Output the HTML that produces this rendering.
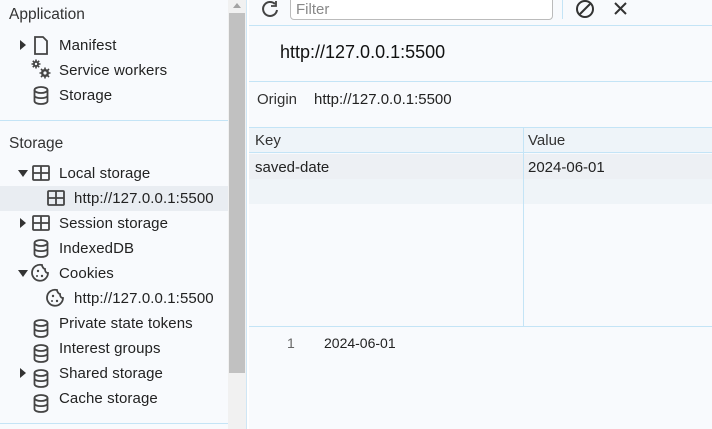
<!DOCTYPE html>
<html><head><style>
*{box-sizing:border-box;margin:0;padding:0}
body{width:712px;height:429px;overflow:hidden;background:#f8fafd;font-family:"Liberation Sans","Noto Sans CJK KR",sans-serif;font-size:15px;color:#222;position:relative}
.a{position:absolute;white-space:nowrap}
.row{position:absolute;left:0;height:25px;line-height:25px;letter-spacing:0.1px}
.hdr{color:#333;font-size:15.5px}
</style></head><body>
<div class="a" style="left:0;top:0;width:228px;height:429px;background:#f8fafd"></div>
<div class="a hdr" style="left:9px;top:6px">Application</div>
<div class="a" style="left:0;top:120px;width:228px;height:1px;background:#c4e4f6"></div>
<div class="a hdr" style="left:9px;top:135px">Storage</div>
<div class="a" style="left:0;top:423px;width:228px;height:1px;background:#c4e4f6"></div>
<div class="a" style="left:0;top:186px;width:228px;height:25px;background:#e9edf2"></div>

<svg class="a" style="left:0;top:0" width="228" height="429" fill="none" stroke="#444" stroke-width="1.8">
<g fill="#333" stroke="none">
<path d="M20 40l6 5-6 5z"/><path d="M18 170h10l-5 7z"/><path d="M20 218l6 5-6 5z"/><path d="M18 270h10l-5 7z"/><path d="M20 368l6 5-6 5z"/>
</g>
<path d="M35 37h8l4 4v13h-12z"/>
<g fill="#444" stroke="none">
<circle cx="36" cy="64" r="3"/><circle cx="45" cy="73" r="4"/>
</g>
<g stroke="#444" stroke-width="1.6"><path d="M36 59.5v9M31.5 64h9M32.8 60.8l6.4 6.4M39.2 60.8l-6.4 6.4"/><path d="M45 67.5v11M39.5 73h11M41 69l8 8M49 69l-8 8"/></g>
<g fill="#f8fafd" stroke="none"><circle cx="36" cy="64" r="1.2"/><circle cx="45" cy="73" r="1.6"/></g>
<g id="db"><ellipse cx="41" cy="90" rx="6.5" ry="3"/><path d="M34.5 90v11c0 4 13 4 13 0v-11M34.5 95.5c0 3.5 13 3.5 13 0"/></g>
<use href="#db" y="153"/><use href="#db" y="233"/><use href="#db" y="258"/><use href="#db" y="283"/><use href="#db" y="308"/>
<g id="tb"><rect x="33" y="166" width="16" height="14" rx="1"/><path d="M33 173h16M41 166v14"/></g>
<use href="#tb" x="15" y="25"/><use href="#tb" y="50"/>
<g id="ck"><path d="M48 273a8 8 0 1 1-6-8c0 2 2 4 3 4c0 2 1 4 3 4z"/><g fill="#444" stroke="none"><circle cx="38" cy="271" r="1.2"/><circle cx="42" cy="276" r="1.2"/><circle cx="37" cy="276" r="1"/></g></g>
<use href="#ck" x="15" y="25"/>
</svg>
<div class="row" style="top:33px;left:59px">Manifest</div>
<div class="row" style="top:58px;left:59px">Service workers</div>
<div class="row" style="top:83px;left:59px">Storage</div>
<div class="row" style="top:161px;left:59px">Local storage</div>
<div class="row" style="top:186px;left:74px">http://127.0.0.1:5500</div>
<div class="row" style="top:211px;left:59px">Session storage</div>
<div class="row" style="top:236px;left:59px">IndexedDB</div>
<div class="row" style="top:261px;left:59px">Cookies</div>
<div class="row" style="top:286px;left:74px">http://127.0.0.1:5500</div>
<div class="row" style="top:311px;left:59px">Private state tokens</div>
<div class="row" style="top:336px;left:59px">Interest groups</div>
<div class="row" style="top:361px;left:59px">Shared storage</div>
<div class="row" style="top:386px;left:59px">Cache storage</div>
<div class="a" style="left:228px;top:0;width:18px;height:429px;background:#f1f1f1"></div>
<div class="a" style="left:229px;top:13px;width:16px;height:360px;background:#c1c1c1"></div>
<svg class="a" style="left:229px;top:0" width="16" height="12"><path d="M4 8l4-5 4 5z" fill="#a3a3a3"/></svg>
<div class="a" style="left:246px;top:0;width:3px;height:429px;background:#fff;border-left:1px solid #cfe6f5"></div>
<div class="a" style="left:249px;top:0;width:463px;height:429px;background:#f8fafd"></div>
<svg class="a" style="left:258px;top:0" width="24" height="20" fill="none" stroke="#444" stroke-width="2"><path d="M17 4a7 7 0 1 0 2 6"/><path d="M18 1v5h-5" stroke-width="1.8"/></svg>
<div class="a" style="left:290px;top:-4px;width:263px;height:24px;border:1px solid #bbb;border-radius:4px;background:#fff;color:#888;padding:3px 0 0 5px;line-height:20px;font-size:15px">Filter</div>
<div class="a" style="left:562px;top:0;width:1px;height:19px;background:#c4e4f6"></div>
<svg class="a" style="left:574px;top:0" width="60" height="20" fill="none" stroke="#333" stroke-width="2"><circle cx="11" cy="9" r="8"/><path d="M6 14l10-10"/><path d="M41 3l11 11M52 3l-11 11"/></svg>
<div class="a" style="left:249px;top:25px;width:463px;height:1px;background:#c4e4f6"></div>
<div class="a" style="left:280px;top:42px;font-size:18px;color:#111">http://127.0.0.1:5500</div>
<div class="a" style="left:249px;top:81px;width:463px;height:1px;background:#c4e4f6"></div>
<div class="a" style="left:257px;top:91px;color:#333">Origin</div>
<div class="a" style="left:314px;top:91px;color:#222">http://127.0.0.1:5500</div>
<div class="a" style="left:249px;top:127px;width:463px;height:200px;border-top:1px solid #c4e4f6;border-bottom:1px solid #c4e4f6;background:#f8fafd"></div>
<div class="a" style="left:249px;top:128px;width:463px;height:25px;background:#eef4f9;border-bottom:1px solid #c4e4f6"></div>
<div class="a" style="left:249px;top:154px;width:463px;height:25px;background:#edf0f4"></div>
<div class="a" style="left:249px;top:179px;width:463px;height:25px;background:#eff4f8"></div>
<div class="a" style="left:523px;top:128px;width:1px;height:198px;background:#c4e4f6"></div>
<div class="a" style="left:255px;top:132px;color:#333">Key</div>
<div class="a" style="left:528px;top:132px;color:#333">Value</div>
<div class="a" style="left:255px;top:159px">saved-date</div>
<div class="a" style="left:528px;top:159px">2024-06-01</div>
<div class="a" style="left:287px;top:335px;font-size:14px;color:#666">1</div>
<div class="a" style="left:324px;top:335px;font-size:14px;color:#222">2024-06-01</div>
</body></html>
